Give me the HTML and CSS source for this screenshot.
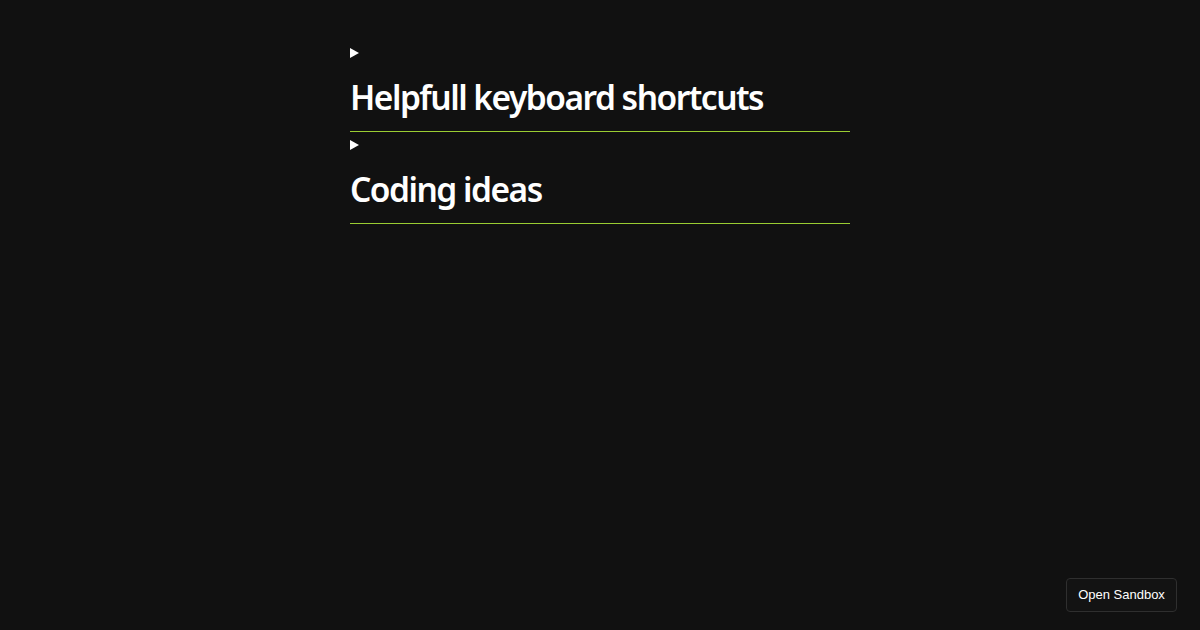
FILE: index.html
```html
<!DOCTYPE html>
<html>
<head>
<meta charset="utf-8">
<link rel="stylesheet" href="styles.css">
</head>
<body>
<main class="list">
  <section class="item">
    <div class="summary"><span class="marker"></span></div>
    <h2 class="title">Helpfull keyboard shortcuts</h2>
  </section>
  <section class="item">
    <div class="summary"><span class="marker"></span></div>
    <h2 class="title">Coding ideas</h2>
  </section>
</main>
<button class="sandbox">Open Sandbox</button>
</body>
</html>
```
FILE: styles.css
```css
html, body {
  margin: 0;
  padding: 0;
  background: #111111;
  height: 100%;
}
body {
  font-family: "Noto Sans", sans-serif;
  color: #ffffff;
  overflow: hidden;
}
.list {
  width: 500px;
  margin: 0 auto;
  padding-top: 40px;
}
.item {
  border-bottom: 1px solid #9acd32;
}
.summary {
  height: 26px;
  display: flex;
  align-items: center;
}
.marker {
  width: 0;
  height: 0;
  border-left: 9px solid #ffffff;
  border-top: 5px solid transparent;
  border-bottom: 5px solid transparent;
}
.title {
  margin: 0;
  padding: 10px 0 13px;
  font-size: 33.5px;
  font-weight: 600;
  letter-spacing: -1.5px;
  line-height: 42px;
}
.sandbox {
  position: fixed;
  right: 23px;
  bottom: 18px;
  width: 111px;
  height: 34px;
  background: #131313;
  color: #ffffff;
  border: 1px solid #2f2f2f;
  border-radius: 4px;
  font-family: "Liberation Sans", Arial, sans-serif;
  font-size: 13px;
  padding: 0 0 2px;
}
```
